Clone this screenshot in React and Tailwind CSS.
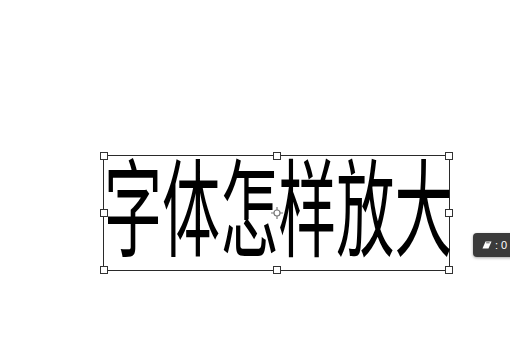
function Handle({ className }) {
  return (
    <span
      className={
        'absolute h-[8px] w-[8px] -translate-x-1/2 -translate-y-1/2 border border-[#333] bg-white ' +
        className
      }
    />
  )
}

export default function App() {
  return (
    <div className="relative h-[340px] w-[510px] overflow-hidden bg-white">
      {/* selected text frame on the canvas */}
      <div className="absolute left-[103px] top-[155px] h-[116px] w-[347px] border border-[#2a2a2a]">
        <div className="absolute left-[0px] top-[-7px] origin-left scale-x-[0.548] whitespace-nowrap font-['Noto_Sans_CJK_SC',sans-serif] text-[106px] font-normal leading-none text-black">
          字体怎样放大
        </div>
        <Handle className="left-0 top-0" />
        <Handle className="left-1/2 top-0" />
        <Handle className="left-full top-0" />
        <Handle className="left-0 top-1/2" />
        <Handle className="left-full top-1/2" />
        <Handle className="left-0 top-full" />
        <Handle className="left-1/2 top-full" />
        <Handle className="left-full top-full" />
        {/* rotation centre */}
        <svg
          className="absolute left-1/2 top-1/2 -translate-x-1/2 -translate-y-1/2"
          width="13"
          height="13"
          viewBox="0 0 13 13"
          fill="none"
        >
          <circle cx="6.5" cy="6.5" r="3" stroke="#7a7a7a" strokeWidth="1.2" fill="white" />
          <path d="M6.5 0.5V3.5M6.5 9.5V12.5M0.5 6.5H3.5M9.5 6.5H12.5" stroke="#7a7a7a" strokeWidth="1.2" />
        </svg>
      </div>

      {/* skew tooltip */}
      <div className="absolute left-[473px] top-[233px] flex h-[24px] items-center gap-[3px] rounded-[4px] bg-[#3b3b3b] pl-[9px] pr-[10px] font-['Liberation_Sans',sans-serif] text-[11px] text-white shadow-[0_1px_3px_rgba(0,0,0,0.35)]">
        <svg width="10" height="8" viewBox="0 0 10 8">
          <path d="M3.5 0.5H9.5L6.5 7.5H0.5Z" fill="white" />
          <path d="M4.2 1.8H7.6" stroke="#3b3b3b" strokeWidth="0.8" />
        </svg>
        <span>:</span>
        <span>0</span>
      </div>
    </div>
  )
}
